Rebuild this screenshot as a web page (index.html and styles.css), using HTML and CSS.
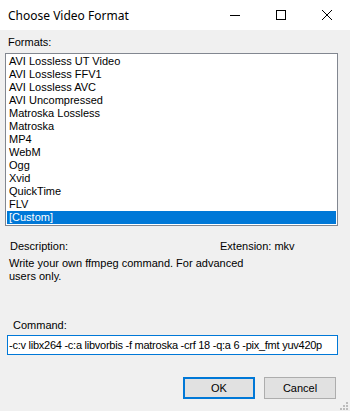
FILE: index.html
```html
<!DOCTYPE html>
<html>
<head>
<meta charset="utf-8">
<link rel="stylesheet" href="styles.css">
</head>
<body>
<div class="window">
  <div class="titlebar">
    <div class="title">Choose Video Format</div>
    <div class="cap"><svg width="10" height="10" viewBox="0 0 10 10"><path d="M0 5.5H10" stroke="#000" stroke-width="1"/></svg></div>
    <div class="cap"><svg width="10" height="10" viewBox="0 0 10 10"><rect x="0.5" y="0.5" width="9" height="9" fill="none" stroke="#000" stroke-width="1"/></svg></div>
    <div class="cap"><svg width="10" height="10" viewBox="0 0 10 10"><path d="M0 0L10 10M10 0L0 10" stroke="#000" stroke-width="1"/></svg></div>
  </div>
  <div class="client">
    <div class="label formats">Formats:</div>
    <div class="list">
      <div class="item">AVI Lossless UT Video</div>
      <div class="item">AVI Lossless FFV1</div>
      <div class="item">AVI Lossless AVC</div>
      <div class="item">AVI Uncompressed</div>
      <div class="item">Matroska Lossless</div>
      <div class="item">Matroska</div>
      <div class="item">MP4</div>
      <div class="item">WebM</div>
      <div class="item">Ogg</div>
      <div class="item">Xvid</div>
      <div class="item">QuickTime</div>
      <div class="item">FLV</div>
      <div class="item selected">[Custom]</div>
    </div>
    <div class="inforow">
      <div class="desc-label">Description:</div>
      <div class="ext-label">Extension: mkv</div>
    </div>
    <div class="desc">Write your own ffmpeg command. For advanced users only.</div>
    <div class="label command">Command:</div>
    <div class="textbox">-c:v libx264 -c:a libvorbis -f matroska -crf 18 -q:a 6 -pix_fmt yuv420p</div>
    <div class="buttons">
      <div class="btn default">OK</div>
      <div class="btn">Cancel</div>
    </div>
    <div class="grip">
      <svg width="9" height="9" viewBox="0 0 9 9">
        <rect x="6" y="0" width="2" height="2" fill="#bcbcbc"/>
        <rect x="3" y="3" width="2" height="2" fill="#bcbcbc"/>
        <rect x="6" y="3" width="2" height="2" fill="#bcbcbc"/>
        <rect x="0" y="6" width="2" height="2" fill="#bcbcbc"/>
        <rect x="3" y="6" width="2" height="2" fill="#bcbcbc"/>
        <rect x="6" y="6" width="2" height="2" fill="#bcbcbc"/>
      </svg>
    </div>
  </div>
</div>
</body>
</html>
```
FILE: styles.css
```css
html, body {
  margin: 0;
  padding: 0;
}
body {
  width: 350px;
  height: 411px;
  overflow: hidden;
  font-family: "Liberation Sans", Arial, sans-serif;
  font-size: 11px;
  color: #000;
}
.window {
  width: 350px;
  height: 411px;
  display: flex;
  flex-direction: column;
}
.titlebar {
  height: 30px;
  background: #fff;
  display: flex;
  align-items: center;
  flex: none;
}
.title {
  flex: 1;
  padding-left: 8px;
  font-family: "Noto Sans", "Open Sans", sans-serif;
  font-size: 12px;
  color: #000;
}
.cap {
  width: 46px;
  height: 30px;
  display: flex;
  align-items: center;
  justify-content: center;
}
.client {
  flex: 1;
  background: #f0f0f0;
  position: relative;
  display: flex;
  flex-direction: column;
}
.label {
  line-height: 13px;
}
.formats {
  padding: 6px 0 0 8px;
}
.list {
  margin: 4px 0 0 5px;
  width: 333px;
  height: 173px;
  box-sizing: border-box;
  border: 1px solid #828790;
  background: #fff;
  padding: 1px;
}
.item {
  line-height: 13px;
  height: 13px;
  padding-left: 2px;
  white-space: nowrap;
}
.item.selected {
  background: #0078d7;
  color: #fff;
}
.inforow {
  display: flex;
  margin-top: 14px;
  line-height: 13px;
}
.desc-label {
  width: 210px;
  padding-left: 10px;
}
.desc {
  margin-top: 4px;
  padding-left: 9px;
  width: 250px;
  line-height: 13px;
}
.command {
  margin-top: 36px;
  padding-left: 13px;
}
.textbox {
  margin: 3px 0 0 7px;
  width: 331px;
  height: 20px;
  box-sizing: border-box;
  border: 1px solid #0078d7;
  background: #fff;
  line-height: 18px;
  padding-left: 1px;
  white-space: nowrap;
  overflow: hidden;
  letter-spacing: -0.25px;
}
.buttons {
  display: flex;
  justify-content: flex-end;
  gap: 9px;
  margin: 22px 14px 0 0;
}
.btn {
  width: 72px;
  height: 22px;
  box-sizing: border-box;
  border: 1px solid #adadad;
  background: #e1e1e1;
  display: flex;
  align-items: center;
  justify-content: center;
  font-size: 11px;
}
.btn.default {
  border: 2px solid #0078d7;
}
.grip {
  position: absolute;
  right: 1px;
  bottom: 0px;
  width: 9px;
  height: 9px;
}
.grip svg {
  display: block;
}
```
